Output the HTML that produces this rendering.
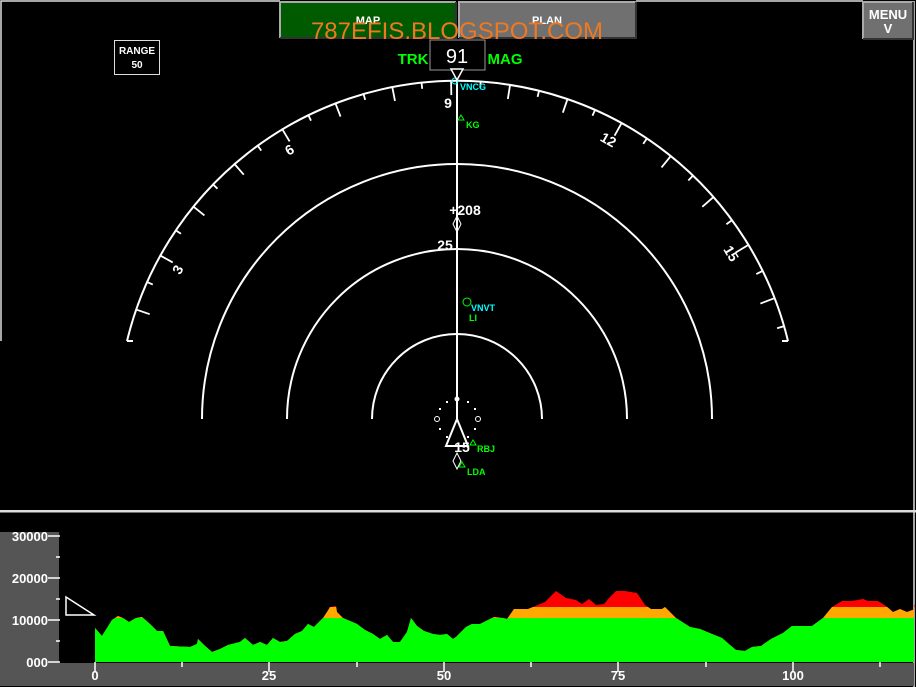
<!DOCTYPE html>
<html><head><meta charset="utf-8"><style>
html,body{margin:0;padding:0;background:#000;width:916px;height:687px;overflow:hidden}
svg{display:block}
</style></head><body>
<svg id="s" width="916" height="687" viewBox="0 0 916 687" xmlns="http://www.w3.org/2000/svg" font-family="Liberation Sans, sans-serif">
<rect width="916" height="687" fill="#000"/>
<path d="M1 341 V1 H280 M636 1 H863 M914 1 V687" stroke="#ddd" stroke-width="1.5" fill="none"/>
<rect x="0" y="510" width="916" height="2.5" fill="#ddd"/>
<g stroke="#fff" stroke-width="2" fill="none">
<path d="M372 419 A85 85 0 0 1 542 419"/>
<path d="M287 419 A170 170 0 0 1 627 419"/>
<path d="M202 419 A255 255 0 0 1 712 419"/>
<path d="M127 341 A340 340 0 0 1 788 341"/>
<path d="M127 341 h6 M788 341 h-6"/>
<line x1="457" y1="72" x2="457" y2="420"/>
</g>
<g id="ticks" stroke="#fff" stroke-width="1.8"></g>
<g fill="#fff" font-size="14" font-weight="bold">
<text x="448" y="108" text-anchor="middle">9</text>
<text transform="translate(606,144) rotate(29)" text-anchor="middle">12</text>
<text transform="translate(727,256) rotate(59)" text-anchor="middle">15</text>
<text transform="translate(292,154) rotate(-31)" text-anchor="middle">6</text>
<text transform="translate(182,272) rotate(-61)" text-anchor="middle">3</text>
<text x="445" y="250" text-anchor="middle">25</text>
<text x="465" y="215" text-anchor="middle">+208</text>
<text x="462" y="452" text-anchor="middle">15</text>
</g>
<path d="M457 216 l4 8 l-4 8 l-4 -8z M457 453 l4 8 l-4 8 l-4 -8z" stroke="#fff" fill="none" stroke-width="1"/>
<path d="M457 419 L446 446 L468 446 Z" stroke="#fff" stroke-width="2" fill="none"/>
<g fill="#fff">
<circle cx="457" cy="399" r="2.5"/><circle cx="437" cy="419" r="2.5" fill="none" stroke="#fff"/><circle cx="478" cy="419" r="2.5" fill="none" stroke="#fff"/>
<rect x="446" y="401" width="2" height="2"/><rect x="467" y="401" width="2" height="2"/>
<rect x="439" y="408" width="2" height="2"/><rect x="474" y="408" width="2" height="2"/>
<rect x="439" y="428" width="2" height="2"/><rect x="474" y="428" width="2" height="2"/>
<rect x="446" y="436" width="2" height="2"/><rect x="467" y="436" width="2" height="2"/>
</g>
<g font-size="9" font-weight="bold">
<circle cx="455" cy="81" r="3" stroke="#0ff" fill="none"/>
<text x="460" y="90" fill="#0ff">VNCG</text>
<path d="M461 115 l3 5 h-6z" stroke="#0f0" fill="none"/>
<text x="466" y="128" fill="#0f0">KG</text>
<circle cx="467" cy="302" r="4" stroke="#0f0" fill="none"/>
<text x="471" y="311" fill="#0ff">VNVT</text>
<text x="469" y="321" fill="#0f0">LI</text>
<path d="M473 440 l3 5 h-6z" stroke="#0f0" fill="none"/>
<text x="477" y="452" fill="#0f0">RBJ</text>
<path d="M462 462 l3 5 h-6z" stroke="#0f0" fill="none"/>
<text x="467" y="475" fill="#0f0">LDA</text>
</g>
<rect x="280" y="2" width="176" height="36" fill="#005a00"/>
<path d="M280 38 V2 H456" stroke="#aaa" stroke-width="2" fill="none"/>
<path d="M456 2 V38 H280" stroke="#333" stroke-width="2" fill="none"/>
<rect x="459" y="2" width="177" height="36" fill="#707070"/>
<path d="M459 38 V2 H636" stroke="#aaa" stroke-width="2" fill="none"/>
<path d="M636 2 V38 H459" stroke="#333" stroke-width="2" fill="none"/>
<text x="368" y="24" fill="#fff" font-size="11" font-weight="bold" text-anchor="middle">MAP</text>
<text x="547" y="24" fill="#fff" font-size="11" font-weight="bold" text-anchor="middle">PLAN</text>
<rect x="863" y="2" width="50" height="37" fill="#707070"/>
<path d="M863 39 V2 H913" stroke="#aaa" stroke-width="2" fill="none"/>
<path d="M913 2 V39 H863" stroke="#333" stroke-width="2" fill="none"/>
<text x="888" y="19" fill="#fff" font-size="13" font-weight="bold" text-anchor="middle">MENU</text>
<text x="888" y="33" fill="#fff" font-size="13" font-weight="bold" text-anchor="middle">V</text>
<text x="457" y="39" fill="#f07820" font-size="24" text-anchor="middle">787EFIS.BLOGSPOT.COM</text>
<rect x="430" y="40" width="55" height="30" fill="none" stroke="#999" stroke-width="1"/>
<text x="457" y="63" fill="#fff" font-size="20" text-anchor="middle">91</text>
<text x="413" y="64" fill="#0f0" font-size="15" font-weight="bold" text-anchor="middle">TRK</text>
<text x="505" y="64" fill="#0f0" font-size="15" font-weight="bold" text-anchor="middle">MAG</text>
<path d="M451 69 H463 L457 80 Z" stroke="#fff" stroke-width="1.5" fill="#000"/>
<rect x="114.5" y="40.5" width="45" height="34" fill="none" stroke="#ddd"/>
<text x="137" y="54" fill="#fff" font-size="10" font-weight="bold" text-anchor="middle">RANGE</text>
<text x="137" y="68" fill="#fff" font-size="10" font-weight="bold" text-anchor="middle">50</text>
<rect x="0" y="532" width="59" height="131" fill="#555"/>
<rect x="0" y="663" width="914" height="23" fill="#555"/>
<defs>
<clipPath id="co"><rect x="0" y="607" width="916" height="80"/></clipPath>
<clipPath id="cg"><rect x="0" y="618" width="916" height="80"/></clipPath>
<path id="terr" d="M95 662 L95 628 102 636 112 620 118 616 123 618 129 622 136 618 142 617 150 624 157 631 163 631 170 646 190 647 197 644 198 639 204 645 212 652 220 649 228 645 240 642 245 638 253 645 260 642 267 645 273 638 280 642 287 641 295 634 302 631 308 624 314 627 323 618 327 612 330 607 336 606 337 612 343 618 350 621 357 624 365 630 373 634 380 639 387 635 393 642 400 642 407 632 411 618 417 626 424 631 433 634 440 635 447 634 453 639 456 637 466 627 472 624 480 624 486 621 494 617 503 618 507 619 514 609 528 609 533 607 545 602 556 591 566 598 576 600 582 604 589 599 596 605 604 604 610 597 616 591 625 591 637 593 645 605 651 609 662 609 665 607 676 618 690 627 700 629 712 634 722 638 730 645 736 650 745 651 752 647 761 646 771 639 783 633 792 626 812 626 823 618 832 607 842 601 852 601 863 599 868 601 878 601 886 606 893 612 900 609 907 612 915 609 914 604 L914 662 Z"/>
</defs>
<use href="#terr" fill="#f00"/>
<g clip-path="url(#co)"><use href="#terr" fill="#ffa800"/></g>
<g clip-path="url(#cg)"><use href="#terr" fill="#00ff00"/></g>
<g stroke="#fff" stroke-width="1.5">
<path d="M48 536 H60 M56 557 H60 M48 578 H60 M56 599 H60 M48 620 H60 M56 641 H60 M48 662 H60"/>
<path d="M95 662 V672 M182 662 V667 M269 662 V672 M357 662 V667 M444 662 V672 M531 662 V667 M618 662 V672 M706 662 V667 M793 662 V672 M880 662 V667"/>
</g>
<g fill="#fff" font-size="13" font-weight="bold" text-anchor="end">
<text x="48" y="541">30000</text><text x="48" y="583">20000</text><text x="48" y="625">10000</text><text x="48" y="667">000</text>
</g>
<g fill="#fff" font-size="13" font-weight="bold" text-anchor="middle">
<text x="95" y="680">0</text><text x="269" y="680">25</text><text x="444" y="680">50</text><text x="618" y="680">75</text><text x="793" y="680">100</text>
</g>
<path d="M66 597 L66 615 L94 615 Z" stroke="#fff" stroke-width="1.5" fill="none"/>
</svg>
<script>
var g=document.getElementById('ticks'),s='';
var cx=457,cy=420,R=340;
for(var h=20;h<=165;h+=5){var a=(h-91)*Math.PI/180;if(Math.abs(h-91)>76)continue;
var L=(h%10==0)?15:7;var sx=Math.sin(a),cy2=Math.cos(a);
s+='<line x1="'+(cx+R*sx)+'" y1="'+(cy-R*cy2)+'" x2="'+(cx+(R-L)*sx)+'" y2="'+(cy-(R-L)*cy2)+'"/>';}
g.innerHTML=s;
</script>
</body></html>
